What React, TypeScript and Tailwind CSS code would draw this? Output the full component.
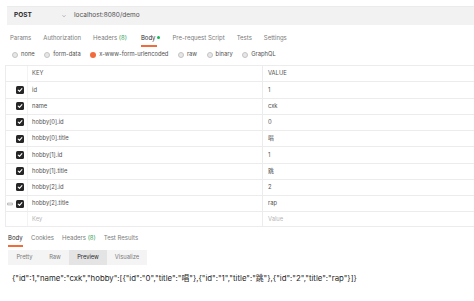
import React from "react";

const rows: { k: string; v: string }[] = [
  { k: "id", v: "1" },
  { k: "name", v: "cxk" },
  { k: "hobby[0].id", v: "0" },
  { k: "hobby[0].title", v: "唱" },
  { k: "hobby[1].id", v: "1" },
  { k: "hobby[1].title", v: "跳" },
  { k: "hobby[2].id", v: "2" },
  { k: "hobby[2].title", v: "rap" },
];

function Check() {
  return (
    <div className="w-[8px] h-[8px] rounded-[1.5px] bg-[#262626] flex items-center justify-center">
      <svg width="6" height="6" viewBox="0 0 10 10">
        <path d="M2 5.2 L4.2 7.3 L8.2 2.8" stroke="#fff" strokeWidth="1.8" fill="none" strokeLinecap="round" strokeLinejoin="round" />
      </svg>
    </div>
  );
}

function Radio({ on }: { on?: boolean }) {
  return on ? (
    <div className="w-[6px] h-[6px] rounded-full bg-[#f26b3a]" />
  ) : (
    <div className="w-[6px] h-[6px] rounded-full border-[1.5px] border-[#c4c4c4] bg-[#e6e6e6]" />
  );
}

export default function App() {
  const font = { fontFamily: 'Inter, "Noto Sans CJK SC", sans-serif' };
  return (
    <div className="w-[474px] h-[301px] bg-white overflow-hidden text-[6px] text-[#555]" style={font}>
      {/* URL bar */}
      <div className="pt-[6px] pl-[7px]">
        <div className="h-[19px] bg-[#f2f2f2] flex items-center border-t border-[#ebebeb]">
          <span className="ml-[7px] w-[36px] font-bold text-[6.5px] text-[#2b2b2b]">POST</span>
          <svg width="6" height="6" viewBox="0 0 10 10" className="ml-[11px]">
            <path d="M2.5 3.8 L5 6.3 L7.5 3.8" stroke="#9a9a9a" strokeWidth="1.2" fill="none" />
          </svg>
          <span className="ml-[7px] text-[6.5px] text-[#505050]">localhost:8080/demo</span>
        </div>
      </div>

      {/* request tabs */}
      <div className="h-[20px] pl-[10px] flex items-start gap-[12px] text-[#7a7a7a] text-[6px]">
        <div className="pt-[8px]">Params</div>
        <div className="pt-[8px]">Authorization</div>
        <div className="pt-[8px]">
          Headers <span className="text-[#3ba55c]">(8)</span>
        </div>
        <div className="pt-[8px] ml-[2px] flex flex-col">
          <div className="flex items-center text-[#2b2b2b]">
            Body
            <span className="ml-[2px] w-[3px] h-[3px] rounded-full bg-[#0cbb52]" />
          </div>
          <div className="mt-[3px] h-[1.5px] w-[16px] bg-[#f26b3a]" />
        </div>
        <div className="pt-[8px]">Pre-request Script</div>
        <div className="pt-[8px]">Tests</div>
        <div className="pt-[8px]">Settings</div>
      </div>

      {/* body types */}
      <div className="h-[19px] pl-[12px] flex items-center gap-[9.5px] text-[5.8px] text-[#505050]">
        {[
          ["none", false],
          ["form-data", false],
          ["x-www-form-urlencoded", true],
          ["raw", false],
          ["binary", false],
          ["GraphQL", false],
        ].map(([t, on]) => (
          <div key={t as string} className="flex items-center gap-[3px]">
            <Radio on={on as boolean} />
            <span>{t as string}</span>
          </div>
        ))}
      </div>

      {/* table */}
      <div className="ml-[5px] mt-[1px] border-t border-l border-b border-[#ececec]">
        <div className="flex h-[16.25px] border-b border-[#ececec] text-[5.8px] text-[#555]">
          <div className="w-[22px] border-r border-[#f3f3f3]" />
          <div className="w-[235px] pl-[4px] flex items-center border-r border-[#ececec]">KEY</div>
          <div className="flex-1 pl-[5px] flex items-center">VALUE</div>
        </div>
        {rows.map((r, i) => (
          <div key={i} className="flex h-[16.25px] border-b border-[#ececec] text-[5.8px] text-[#505050]">
            <div className="w-[22px] relative flex items-center justify-end pr-[3px] border-r border-[#f3f3f3]">
              {i === rows.length - 1 && (
                <svg width="6" height="6" viewBox="0 0 10 10" className="absolute left-[1px] top-[5px]">
                  <path d="M1 3.5 H9 M1 6.5 H9" stroke="#8a8a8a" strokeWidth="1" />
                  <path d="M1 3.5 V6.5 M9 3.5 V6.5" stroke="#8a8a8a" strokeWidth="1" />
                </svg>
              )}
              <Check />
            </div>
            <div className="w-[235px] pl-[4px] flex items-center border-r border-[#ececec]">{r.k}</div>
            <div className="flex-1 pl-[5px] flex items-center">{r.v}</div>
          </div>
        ))}
        <div className="flex h-[14px] text-[5.8px] text-[#b5b5b5]">
          <div className="w-[22px] border-r border-[#f3f3f3]" />
          <div className="w-[235px] pl-[4px] flex items-center border-r border-[#ececec]">Key</div>
          <div className="flex-1 pl-[5px] flex items-center">Value</div>
        </div>
      </div>

      {/* response tabs */}
      <div className="h-[18px] pl-[8px] flex items-start gap-[8px] text-[6px] text-[#7a7a7a]">
        <div className="pt-[6px] flex flex-col">
          <span className="text-[#2b2b2b]">Body</span>
          <div className="mt-[3px] h-[1.5px] w-[15px] bg-[#f26b3a]" />
        </div>
        <div className="pt-[6px]">Cookies</div>
        <div className="pt-[6px]">
          Headers <span className="text-[#3ba55c]">(8)</span>
        </div>
        <div className="pt-[6px]">Test Results</div>
      </div>

      {/* view modes */}
      <div className="ml-[8px] mt-[5px] w-[139px] h-[15px] flex bg-[#f4f4f4] text-[5.8px] text-[#7a7a7a]">
        <div className="w-[33px] flex items-center justify-center">Pretty</div>
        <div className="w-[28px] flex items-center justify-center">Raw</div>
        <div className="w-[38px] flex items-center justify-center bg-[#e4e4e4] text-[#2b2b2b]">Preview</div>
        <div className="w-[40px] flex items-center justify-center">Visualize</div>
      </div>

      {/* preview */}
      <div className="pl-[12px] pt-[8px] text-[7.8px] text-[#1f1f1f]">
        {'{"id":1,"name":"cxk","hobby":[{"id":"0","title":"唱"},{"id":"1","title":"跳"},{"id":"2","title":"rap"}]}'}
      </div>
    </div>
  );
}
